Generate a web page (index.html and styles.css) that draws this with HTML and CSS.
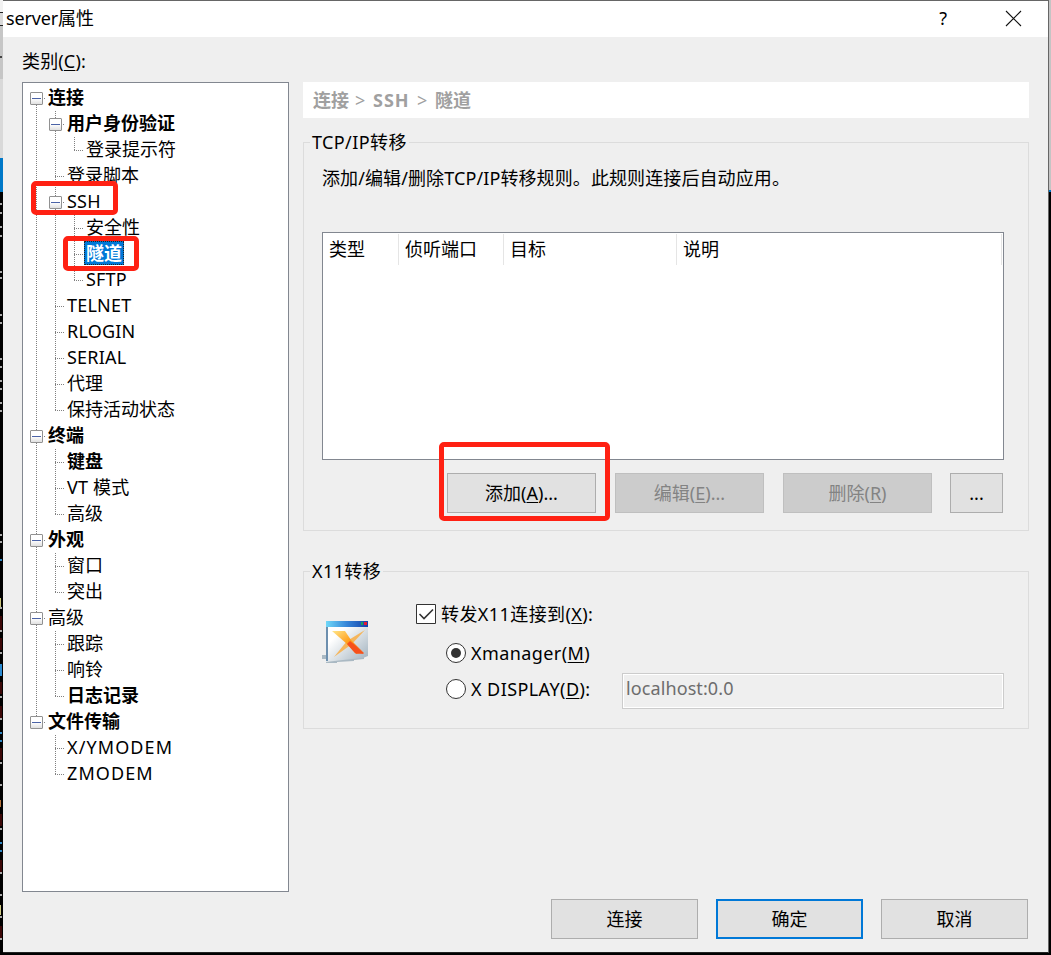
FILE: index.html
```
<!DOCTYPE html>
<html lang="zh-CN">
<head>
<meta charset="utf-8">
<title>server属性</title>
<link rel="stylesheet" href="styles.css">
</head>
<body>
<div class="desktop">
  <svg class="edge" width="3" height="955" viewBox="0 0 3 955" shape-rendering="crispEdges">
    <rect width="3" height="955" fill="#000"/><rect width="3" height="158" fill="#d9d9d9"/><rect width="3" height="12" fill="#f2f2f2"/>
    <rect y="12" width="3" height="1" fill="#222"/><rect y="25" width="3" height="1" fill="#222"/><rect y="26" width="3" height="53" fill="#c6c6c6"/>
    <rect y="56" width="2" height="2" fill="#444"/><rect y="158" width="3" height="34" fill="#0078c8"/>
    <path d="M0 204h2M0 213h2M0 227h2M0 236h2M0 272h2M0 278h2M0 315h2M0 323h2M0 359h2M0 367h2M0 381h2M0 389h2M0 403h2M0 411h2M0 535h2M0 542h2M0 608h2M0 631h2M0 653h2M0 697h2M0 719h2M0 763h2M0 785h2M0 829h2M0 873h2M0 895h2M0 917h2M0 939h2" stroke="#aaa" stroke-width="2"/>
    <path d="M0 616v14M0 638v12M0 682v12M0 706v12M0 748v12M0 814v12M0 860v12M0 926v12" stroke="#3c0808" stroke-width="3"/>
    <path d="M0 560h2M0 733h2M0 741h2M0 843h2M0 851h2" stroke="#2d87c4" stroke-width="2"/>
    <rect y="664" width="2" height="12" fill="#2b8bd2"/><rect y="598" width="1" height="9" fill="#c9c37a"/><rect y="800" width="1" height="7" fill="#b5723a"/><rect y="905" width="1" height="10" fill="#d0cb84"/>
  </svg>
  <main class="dialog">
    <header class="titlebar">
      <span class="title">server属性</span>
      <span class="help">?</span>
      <svg class="close" width="17" height="17" viewBox="0 0 17 17"><path d="M1 1L16 16M16 1L1 16" stroke="#111" stroke-width="1.1"/></svg>
    </header>
    <div class="content">
      <section class="side">
        <div class="label">类别(<u>C</u>):</div>
        <div class="tree">
          <div class="row bold"><i class="g toggle first"></i><span>连接</span></div>
          <div class="row bold"><i class="g v"></i><i class="g toggle"></i><span>用户身份验证</span></div>
          <div class="row"><i class="g v"></i><i class="g v"></i><i class="g elbow"></i><span>登录提示符</span></div>
          <div class="row"><i class="g v"></i><i class="g v h"></i><span>登录脚本</span></div>
          <div class="row"><i class="g v"></i><i class="g toggle"></i><span class="en">SSH</span></div>
          <div class="row"><i class="g v"></i><i class="g v"></i><i class="g v h"></i><span>安全性</span></div>
          <div class="row"><i class="g v"></i><i class="g v"></i><i class="g v h"></i><span class="selected">隧道</span></div>
          <div class="row"><i class="g v"></i><i class="g v"></i><i class="g elbow"></i><span class="en">SFTP</span></div>
          <div class="row"><i class="g v"></i><i class="g v h"></i><span class="en">TELNET</span></div>
          <div class="row"><i class="g v"></i><i class="g v h"></i><span class="en">RLOGIN</span></div>
          <div class="row"><i class="g v"></i><i class="g v h"></i><span class="en">SERIAL</span></div>
          <div class="row"><i class="g v"></i><i class="g v h"></i><span>代理</span></div>
          <div class="row"><i class="g v"></i><i class="g elbow"></i><span>保持活动状态</span></div>
          <div class="row bold"><i class="g toggle"></i><span>终端</span></div>
          <div class="row bold"><i class="g v"></i><i class="g v h"></i><span>键盘</span></div>
          <div class="row"><i class="g v"></i><i class="g v h"></i><span class="en">VT 模式</span></div>
          <div class="row"><i class="g v"></i><i class="g elbow"></i><span>高级</span></div>
          <div class="row bold"><i class="g toggle"></i><span>外观</span></div>
          <div class="row"><i class="g v"></i><i class="g v h"></i><span>窗口</span></div>
          <div class="row"><i class="g v"></i><i class="g elbow"></i><span>突出</span></div>
          <div class="row"><i class="g toggle"></i><span>高级</span></div>
          <div class="row"><i class="g v"></i><i class="g v h"></i><span>跟踪</span></div>
          <div class="row"><i class="g v"></i><i class="g v h"></i><span>响铃</span></div>
          <div class="row bold"><i class="g v"></i><i class="g elbow"></i><span>日志记录</span></div>
          <div class="row bold"><i class="g toggle last"></i><span>文件传输</span></div>
          <div class="row"><i class="g"></i><i class="g v h"></i><span class="wide">X/YMODEM</span></div>
          <div class="row"><i class="g"></i><i class="g elbow"></i><span class="wide">ZMODEM</span></div>
        </div>
      </section>
      <section class="pane">
        <div class="crumbs"><b>连接</b><span>&gt;</span><b class="ssh">SSH</b><span>&gt;</span><b>隧道</b></div>
        <fieldset class="group tcp">
          <legend>TCP/IP转移</legend>
          <p class="desc">添加/编辑/删除TCP/IP转移规则。此规则连接后自动应用。</p>
          <div class="list">
            <div class="list-head"><span>类型</span><span>侦听端口</span><span>目标</span><span>说明</span></div>
          </div>
          <div class="actions">
            <button class="btn">添加(<u>A</u>)...</button>
            <button class="btn off">编辑(<u>E</u>)...</button>
            <button class="btn off">删除(<u>R</u>)</button>
            <button class="btn more">...</button>
          </div>
        </fieldset>
        <fieldset class="group x11">
          <legend>X11转移</legend>
          <div class="x11-body">
            <svg class="logo" width="48" height="46" viewBox="0 0 48 46">
              <defs>
                <linearGradient id="bar"><stop offset="0" stop-color="#70d8f8"/><stop offset=".5" stop-color="#3585d8"/><stop offset="1" stop-color="#1441a8"/></linearGradient>
                <linearGradient id="sheet" x2="1" y2="1"><stop offset=".3" stop-color="#fff"/><stop offset="1" stop-color="#9fb0bd"/></linearGradient>
                <linearGradient id="gold" x2="1" y2="1"><stop offset="0" stop-color="#ffe68a"/><stop offset=".5" stop-color="#ff9c18"/><stop offset="1" stop-color="#f45a20"/></linearGradient>
              </defs>
              <path d="M0 36h5v4l37-3v3l-10 1v1l-17 1v1H4v-4H0z" fill="#aab9c3"/>
              <path d="M4 2h42v35l-5 2-20 2-17 2z" fill="url(#sheet)"/>
              <path d="M4 2h2v40H4z" fill="#6d8fae"/>
              <path d="M4 2h42v6H4z" fill="url(#bar)"/>
              <path d="M39 3h2v3h-2z" fill="#18a060"/><path d="M42 3h3v3h-3z" fill="#e31b35"/>
              <path d="M43 11L30 25 12 38 25 22z" fill="#f5b65c"/>
              <path d="M10 12h13l6 9 13 13-8 1-9-10z" fill="url(#gold)"/>
              <path d="M28 22l6 5 8 8-9-1-8-9z" fill="#f6501c"/>
            </svg>
            <div class="options">
              <label class="opt"><svg width="20" height="20" viewBox="0 0 20 20"><path d="M.5.5h19v19H.5z" fill="#fff" stroke="#333"/><path d="M3.500 10l4.500 4.500L17 5.500" fill="none" stroke="#333" stroke-width="1.6"/></svg><span>转发X11连接到(<u>X</u>):</span></label>
              <label class="opt sub"><svg width="20" height="20" viewBox="0 0 20 20"><circle cx="10" cy="10" r="9.500" fill="#fff" stroke="#333"/><circle cx="10" cy="10" r="5" fill="#333"/></svg><span>Xmanager(<u>M</u>)</span></label>
              <div class="line">
                <label class="opt sub"><svg width="20" height="20" viewBox="0 0 20 20"><circle cx="10" cy="10" r="9.500" fill="#fff" stroke="#333"/></svg><span>X DISPLAY(<u>D</u>):</span></label>
                <div class="field">localhost:0.0</div>
              </div>
            </div>
          </div>
        </fieldset>
      </section>
    </div>
    <footer class="footer">
      <button class="btn">连接</button>
      <button class="btn ok">确定</button>
      <button class="btn">取消</button>
    </footer>
  </main>
  <div class="edge-right"></div>
  <div class="mark mark-ssh"></div>
  <div class="mark mark-tunnel"></div>
  <div class="mark mark-add"></div>
</div>
</body>
</html>
```
FILE: styles.css
```
* { box-sizing: border-box; }
body { margin: 0; background: #000; color: #000; font: 18px/24px "Noto Sans", "Noto Sans CJK SC", sans-serif; overflow: hidden; }
u { text-decoration-thickness: 1px; text-underline-offset: 2px; }
.desktop { position: relative; display: flex; width: 1051px; height: 955px; background: #000; }
.edge { flex: none; display: block; }
.dialog { display: flex; flex-direction: column; width: 1046px; height: 953px; background: #efefef; border: solid #666; border-width: 1px 1px 1px 0; border-bottom-color: #222; }
.edge-right { width: 2px; background: linear-gradient(#c4c4c4 0 190px, #0078c8 190px 192px, #000 192px); }

.titlebar { display: flex; align-items: center; height: 36px; flex: none; padding: 0 26px 2px 3px; background: #fff; }
.title { letter-spacing: -.15px; }
.help { margin-left: auto; margin-right: 58px; }
.close { display: block; }

.content { display: flex; gap: 14px; padding: 0 19px; height: 855px; flex: none; }
.side { flex: none; width: 267px; padding-top: 12px; }
.label { height: 33px; letter-spacing: .15px; }
.tree { height: 810px; border: 1px solid #828790; background: #fff; padding: 2px 0 0 4px; }
.row { display: flex; height: 26px; align-items: flex-start; white-space: nowrap; }
.row span { padding-left: 2px; line-height: 24px; }
.row .en { letter-spacing: .2px; }
.row .wide { letter-spacing: 1.1px; }
.bold { font-weight: 700; }
.row .selected { background: #0078d7; color: #fff; outline: 1px dotted #222; outline-offset: -1px; line-height: 24px; padding: 0 2px; font-weight: 700; }

/* Tree guide cells: dotted verticals, branches and collapse boxes */
.g {
  --down: repeating-linear-gradient(#808080 0 1px, transparent 1px 2px);
  --across: repeating-linear-gradient(90deg, #808080 0 1px, transparent 1px 2px);
  position: relative; flex: none; width: 19px; height: 26px; background-repeat: no-repeat;
}
.v { background-image: var(--down); background-size: 1px 26px; background-position: 9px 0; }
.v.h { background-image: var(--down), var(--across); background-size: 1px 26px, 9px 1px; background-position: 9px 0, 9px 13px; }
.elbow { background-image: var(--down), var(--across); background-size: 1px 13px, 9px 1px; background-position: 9px 0, 9px 13px; }
.toggle { background-image: var(--down); background-size: 1px 26px; background-position: 9px 0; }
.toggle.first { background-size: 1px 12px; background-position: 9px 14px; }
.toggle.last { background-size: 1px 12px; }
.toggle::before { content: ""; position: absolute; left: 3px; top: 7px; width: 13px; height: 13px; box-sizing: border-box; border: 1px solid #919191; border-radius: 1px; background: linear-gradient(#4b63a7, #4b63a7) center / 9px 1px no-repeat, linear-gradient(#fff 50%, #e0e0e0); }
.toggle::after { content: ""; position: absolute; left: 17px; top: 13px; width: 1px; height: 1px; background: #808080; }

.pane { flex: none; width: 726px; padding-top: 45px; }
.crumbs { display: flex; align-items: center; gap: 6px; height: 36px; padding-left: 10px; background: #fff; color: #a0a0a0; }
.crumbs span { width: 12px; }
.ssh { width: 38px; letter-spacing: 1px; }
.group { margin: 12px 0 0; min-width: 0; padding: 0 24px 0 18px; border: 1px solid #dcdcdc; }
.group legend { margin-left: -12px; padding: 0 2px; height: 24px; letter-spacing: .4px; }
.tcp { height: 401px; }
.desc { margin: 12px 0 42px; height: 24px; white-space: nowrap; letter-spacing: .1px; }
.list { width: 682px; height: 228px; border: 1px solid #828790; background: #fff; padding-top: 1px; }
.list-head { display: grid; grid-template-columns: 76px 105px 173px 325px; height: 30px; line-height: 31px; }
.list-head span { padding-left: 6px; border-right: 1px solid #e5e5e5; }
.actions { display: flex; justify-content: flex-end; gap: 19px; margin: 13px 1px 0 0; }
.btn { width: 149px; height: 40px; padding: 0; border: 1px solid #adadad; background: #e1e1e1; color: #000; font: inherit; }
.off { background: #ccc; border-color: #bfbfbf; color: #838383; }
.more { width: 53px; margin-left: -1px; }

.x11 { margin-top: 28px; height: 170px; }
.x11-body { display: flex; padding-top: 20px; }
.logo { margin-top: 16px; }
.options { margin-left: 46px; padding-top: 1px; }
.opt { display: flex; align-items: center; height: 20px; gap: 5px; white-space: nowrap; letter-spacing: .42px; }
.sub { margin-left: 30px; }
.options > .sub { margin-top: 19px; }
.line { display: flex; align-items: flex-start; margin-top: 10px; }
.line .opt { width: 176px; margin-top: 6px; }
.field { width: 382px; height: 36px; border: 1px solid #ccc; box-shadow: inset 0 0 0 1px #fff; padding: 2px 3px; color: #6d6d6d; letter-spacing: .1px; }

.footer { display: flex; gap: 18px; justify-content: flex-end; padding: 7px 20px 0 0; }
.footer .btn { width: 147px; }
.ok { border: 2px solid #0078d7; }

/* Red annotations laid over the dialog */
.mark { position: absolute; border: 5px solid #ff2113; border-radius: 5px; }
.mark-ssh { left: 31px; top: 181px; width: 87px; height: 34px; }
.mark-tunnel { left: 63px; top: 236px; width: 76px; height: 35px; }
.mark-add { left: 439px; top: 442px; width: 171px; height: 79px; }
```
